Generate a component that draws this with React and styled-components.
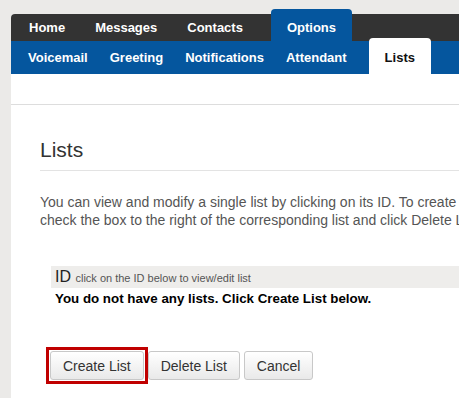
import React from 'react';
import styled, { createGlobalStyle } from 'styled-components';

const colors = {
    page: '#ebeae8',
    dark: '#333333',
    blue: '#05569e',
    text: '#555555',
    heading: '#333333',
    line: '#dddddd',
    rowBg: '#eeedeb',
    focus: '#c00000',
};

const GlobalStyle = createGlobalStyle`
    html, body {
        margin: 0;
        padding: 0;
        background: ${colors.page};
        overflow: hidden;
    }
    body {
        font-family: "Liberation Sans", Arial, sans-serif;
    }
`;

const Page = styled.div`
    padding: 14px 0 0 11px;
    min-height: 398px;
    box-sizing: border-box;
`;

const Panel = styled.div`
    width: 640px;
    min-height: 400px;
    background: #fff;
    border-top-left-radius: 4px;
`;

const TopNav = styled.nav`
    display: flex;
    align-items: flex-end;
    height: 27px;
    padding-left: 3px;
    background: ${colors.dark};
    border-top-left-radius: 4px;
`;

const SubNav = styled.nav`
    display: flex;
    align-items: flex-end;
    height: 33px;
    padding-left: 6px;
    background: ${colors.blue};
`;

const NavItem = styled.a`
    display: block;
    padding: 0 ${p => p.$pad}px;
    line-height: ${p => p.$h}px;
    color: #fff;
    font-size: 13px;
    font-weight: bold;
    text-decoration: none;
    white-space: nowrap;
`;

// active tab sticks up over the bar above it
const ActiveTab = styled(NavItem)`
    margin-left: ${p => p.$gap}px;
    padding: ${p => p.$lift}px 16px 0;
    background: ${p => p.$bg};
    color: ${p => p.$fg};
    border-radius: 4px 4px 0 0;
`;

const Strip = styled.div`
    height: 30px;
    border-bottom: 1px solid ${colors.line};
`;

const Content = styled.div`
    padding-left: 29px;
`;

const Title = styled.h1`
    margin: 33px 0 0;
    padding-bottom: 8px;
    border-bottom: 1px solid #e3e3e3;
    font-size: 21px;
    line-height: 24px;
    font-weight: normal;
    color: ${colors.heading};
`;

const Intro = styled.p`
    margin: 22px 0 0;
    font-size: 14px;
    line-height: 18px;
    color: ${colors.text};
    white-space: nowrap;
`;

const ListTable = styled.div`
    margin: 37px 0 0 11px;
`;

const HeaderRow = styled.div`
    height: 22px;
    padding-left: 4px;
    background: ${colors.rowBg};
    line-height: 22px;
    white-space: nowrap;

    b {
        font-size: 16px;
        font-weight: normal;
        color: #222;
    }
    span {
        font-size: 11px;
        color: ${colors.text};
    }
`;

const EmptyMsg = styled.div`
    margin-top: 2px;
    padding-left: 4px;
    font-size: 13.33px;
    line-height: 18px;
    font-weight: bold;
    color: #000;
    white-space: nowrap;
`;

const ButtonRow = styled.div`
    display: flex;
    align-items: center;
    gap: 4px;
    margin: 43px 0 0 10px;
`;

const FocusRing = styled.span`
    display: flex;
    outline: 3px solid ${colors.focus};
    outline-offset: 1px;
`;

const Button = styled.button`
    height: 29px;
    padding: 0 12px;
    border: 1px solid #c8c8c8;
    border-radius: 3px;
    background: linear-gradient(#ffffff, #e9e9e9);
    font-family: "Liberation Sans", Arial, sans-serif;
    font-size: 14px;
    color: #333;
    cursor: pointer;
    outline: none;
`;

const topItems = ['Home', 'Messages', 'Contacts'];
const subItems = ['Voicemail', 'Greeting', 'Notifications', 'Attendant'];

export default function App() {
    return (
        <>
            <GlobalStyle />
            <Page>
                <Panel>
                    <TopNav>
                        {topItems.map(item => (
                            <NavItem key={item} $pad={15} $h={27}>{item}</NavItem>
                        ))}
                        <ActiveTab $pad={15} $gap={13} $h={27} $lift={5} $bg={colors.blue} $fg="#fff">
                            Options
                        </ActiveTab>
                    </TopNav>
                    <SubNav>
                        {subItems.map(item => (
                            <NavItem key={item} $pad={11} $h={33}>{item}</NavItem>
                        ))}
                        <ActiveTab $pad={11} $gap={11} $h={33} $lift={3} $bg="#fff" $fg="#111">
                            Lists
                        </ActiveTab>
                    </SubNav>
                    <Strip />
                    <Content>
                        <Title>Lists</Title>
                        <Intro>
                            You can view and modify a single list by clicking on its ID. To create a new list, click Create List. To delete a list,
                            <br />
                            check the box to the right of the corresponding list and click Delete List.
                        </Intro>
                        <ListTable>
                            <HeaderRow>
                                <b>ID</b> <span>click on the ID below to view/edit list</span>
                            </HeaderRow>
                            <EmptyMsg>You do not have any lists. Click Create List below.</EmptyMsg>
                        </ListTable>
                        <ButtonRow>
                            <FocusRing>
                                <Button>Create List</Button>
                            </FocusRing>
                            <Button>Delete List</Button>
                            <Button>Cancel</Button>
                        </ButtonRow>
                    </Content>
                </Panel>
            </Page>
        </>
    );
}
